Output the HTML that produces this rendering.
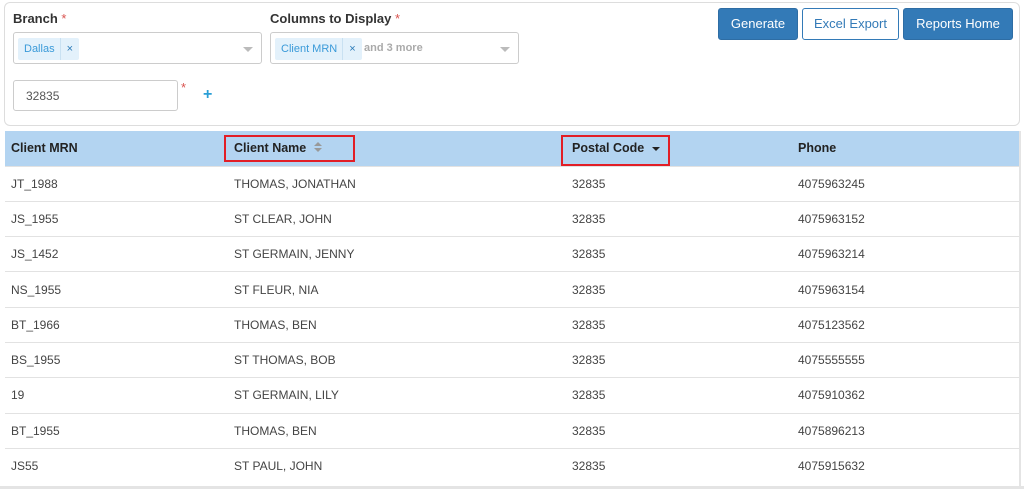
<!DOCTYPE html>
<html><head><meta charset="utf-8"><style>
*{box-sizing:border-box;margin:0;padding:0}
body{width:1024px;height:489px;background:#fff;font-family:"Liberation Sans",sans-serif;color:#333;position:relative;overflow:hidden}
.panel{position:absolute;left:4px;top:2px;width:1016px;height:124px;border:1px solid #ddd;border-radius:6px;background:#fff}
.lbl{position:absolute;font-weight:bold;font-size:13px;color:#333}
.lbl b{color:#d9534f;font-weight:normal}
.sel{position:absolute;height:32px;border:1px solid #ccc;border-radius:3px;background:#fff}
.tag{position:absolute;top:5px;height:22px;background:#e3f1fb;color:#3a9ad9;font-size:11px;line-height:22px;padding-left:6px;border-radius:2px}
.tag i{font-style:normal;display:inline-block;border-left:1px solid #c9e1f2;padding:0 6px;margin-left:5px;font-size:11px;color:#2a7ab8}
.caret{position:absolute;top:14px;width:0;height:0;border-left:5px solid transparent;border-right:5px solid transparent;border-top:5px solid #bbb}
.btn{position:absolute;top:8px;height:32px;border-radius:3px;font-size:13px;line-height:30px;text-align:center;color:#fff;background:#337ab7;border:1px solid #2e6da4}
table{position:absolute;left:5px;top:131px;width:1015px;border-collapse:collapse;font-size:12px}
th{background:#b3d4f1;height:35px;text-align:left;font-weight:bold;font-size:12.5px;color:#222;padding-left:6px}
td{height:35.3px;border-top:1px solid #e2e2e2;padding-left:6px;color:#444}
.red{position:absolute;border:2px solid #e21e26}
</style></head><body>
<div class="panel"></div>
<div class="lbl" style="left:13px;top:11px">Branch <b>*</b></div>
<div class="lbl" style="left:270px;top:11px">Columns to Display <b>*</b></div>
<div class="sel" style="left:13px;top:32px;width:249px"><div class="tag" style="left:4px">Dallas<i>×</i></div><div class="caret" style="left:229px"></div></div>
<div class="sel" style="left:270px;top:32px;width:249px"><div class="tag" style="left:4px">Client MRN<i>×</i></div><span style="position:absolute;left:93px;top:9px;font-size:11px;color:#aaa;font-weight:bold">and 3 more</span><div class="caret" style="left:229px"></div></div>
<div class="sel" style="left:13px;top:80px;width:165px;height:31px"><span style="position:absolute;left:12px;top:8px;font-size:12px;color:#555">32835</span></div>
<span style="position:absolute;left:181px;top:80px;color:#d9534f;font-size:13px">*</span>
<span style="position:absolute;left:203px;top:86px;color:#2a9fd6;font-size:16px;font-weight:bold">+</span>
<div class="btn" style="left:718px;width:80px">Generate</div>
<div class="btn" style="left:802px;width:97px;background:#fff;color:#337ab7;border-color:#337ab7">Excel Export</div>
<div class="btn" style="left:903px;width:110px">Reports Home</div>
<table>
<tr><th style="width:223px">Client MRN</th><th style="width:338px">Client Name <svg width="8" height="12" viewBox="0 0 8 12" style="vertical-align:-1px;margin-left:4px"><path d="M0 5L4 1L8 5Z M0 7L4 11L8 7Z" fill="#999"/></svg></th><th style="width:226px">Postal Code <svg width="8" height="5" viewBox="0 0 8 5" style="vertical-align:0;margin-left:4px"><path d="M0 0L8 0L4 4Z" fill="#222"/></svg></th><th>Phone</th></tr>
<tr><td>JT_1988</td><td>THOMAS, JONATHAN</td><td>32835</td><td>4075963245</td></tr>
<tr><td>JS_1955</td><td>ST CLEAR, JOHN</td><td>32835</td><td>4075963152</td></tr>
<tr><td>JS_1452</td><td>ST GERMAIN, JENNY</td><td>32835</td><td>4075963214</td></tr>
<tr><td>NS_1955</td><td>ST FLEUR, NIA</td><td>32835</td><td>4075963154</td></tr>
<tr><td>BT_1966</td><td>THOMAS, BEN</td><td>32835</td><td>4075123562</td></tr>
<tr><td>BS_1955</td><td>ST THOMAS, BOB</td><td>32835</td><td>4075555555</td></tr>
<tr><td>19</td><td>ST GERMAIN, LILY</td><td>32835</td><td>4075910362</td></tr>
<tr><td>BT_1955</td><td>THOMAS, BEN</td><td>32835</td><td>4075896213</td></tr>
<tr><td>JS55</td><td>ST PAUL, JOHN</td><td>32835</td><td>4075915632</td></tr>
</table>
<div class="red" style="left:224px;top:135px;width:131px;height:27px"></div>
<div class="red" style="left:561px;top:135px;width:109px;height:31px"></div>
<div style="position:absolute;left:1019px;top:131px;width:2px;height:358px;background:#e4e4e4"></div>
<div style="position:absolute;left:0;top:486px;width:1024px;height:3px;background:#e4e4e4"></div>
</body></html>
